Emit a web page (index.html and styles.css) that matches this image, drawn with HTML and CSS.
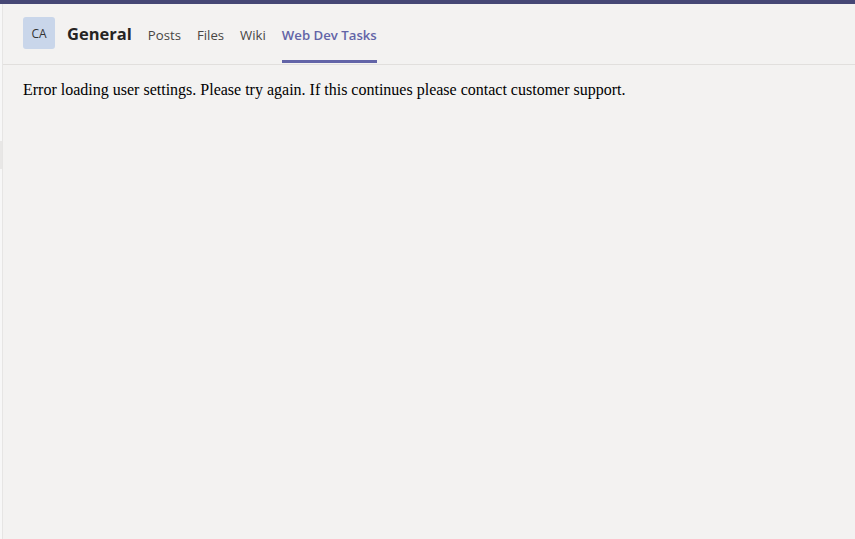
FILE: index.html
```html
<!DOCTYPE html>
<html>
<head>
<meta charset="utf-8">
<link rel="stylesheet" href="styles.css">
</head>
<body>
<div class="topbar"></div>
<div class="main">
  <div class="rail"><div class="rail-patch"></div></div>
  <div class="content">
    <header class="header">
      <div class="avatar">CA</div>
      <div class="title">General</div>
      <nav class="tabs">
        <span class="tab">Posts</span>
        <span class="tab">Files</span>
        <span class="tab">Wiki</span>
        <span class="tab active">Web Dev Tasks</span>
      </nav>
    </header>
    <p class="error">Error loading user settings. Please try again. If this continues please contact customer support.</p>
  </div>
</div>
</body>
</html>
```
FILE: styles.css
```css
html, body {
  margin: 0;
  padding: 0;
  height: 100%;
  background: #f3f2f1;
}
body {
  display: flex;
  flex-direction: column;
}
.topbar {
  height: 4px;
  background: #464775;
  flex: none;
}
.main {
  flex: 1;
  display: flex;
}
.rail {
  width: 3px;
  background: #f7f7f7;
  border-right: 1px solid #e6e5e4;
  box-sizing: border-box;
  padding-top: 137px;
}
.rail-patch {
  height: 28px;
  background: #e8e7e6;
}
.content {
  flex: 1;
}
.header {
  height: 60px;
  border-bottom: 1px solid #e1dfdd;
  display: flex;
  align-items: center;
  padding-left: 20px;
  font-family: "Segoe UI", "Open Sans", "Noto Sans", sans-serif;
}
.avatar {
  width: 32px;
  height: 32px;
  border-radius: 3px;
  background: #c9d6ea;
  color: #333;
  font-size: 12px;
  display: flex;
  align-items: center;
  justify-content: center;
  margin-top: -2px;
}
.title {
  margin-left: 12px;
  font-size: 16.5px;
  font-weight: 700;
  color: #252423;
  margin-top: -2px;
}
.tabs {
  display: flex;
  align-self: stretch;
  margin-left: 16px;
  gap: 16px;
}
.tab {
  display: flex;
  align-items: center;
  font-size: 13.2px;
  color: #484644;
  border-bottom: 3px solid transparent;
  padding-top: 5px;
  margin-bottom: 1px;
  box-sizing: border-box;
}
.tab.active {
  color: #6264a7;
  font-weight: 600;
  border-bottom-color: #6264a7;
}
.error {
  margin: 16px 0 0 20px;
  font-family: "Liberation Serif", serif;
  font-size: 16px;
  color: #000;
}
```
